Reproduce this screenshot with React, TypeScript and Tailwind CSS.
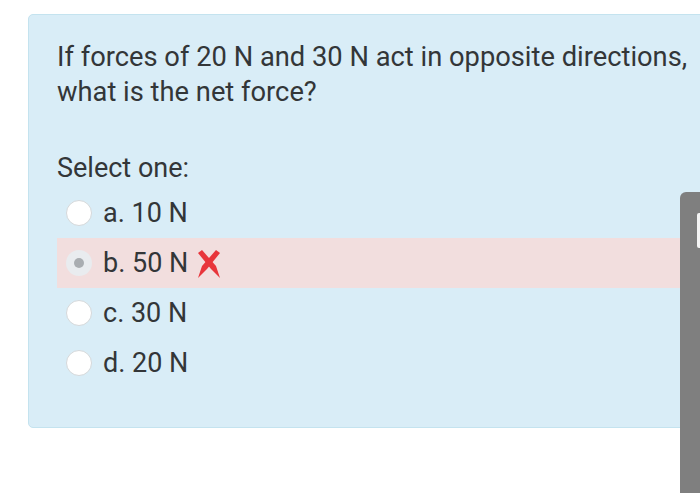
import React from "react";

const Radio = ({ checked }: { checked?: boolean }) =>
  checked ? (
    <span className="flex h-[26px] w-[26px] items-center justify-center rounded-full bg-[#e9ecef]">
      <span className="h-[10px] w-[10px] rounded-full bg-[#a9adb1]" />
    </span>
  ) : (
    <span className="h-[26px] w-[26px] rounded-full border border-[#d5d8da] bg-white" />
  );

const options = [
  { label: "a. 10 N" },
  { label: "b. 50 N", wrong: true },
  { label: "c. 30 N" },
  { label: "d. 20 N" },
];

export default function App() {
  return (
    <div
      className="relative h-[493px] w-[700px] overflow-hidden bg-white text-[#333638]"
      style={{ fontFamily: "Roboto, 'Noto Sans', sans-serif" }}
    >
      <div className="ml-[28px] mt-[14px] h-[414px] w-[700px] rounded-[5px] border border-[#c4e3ef] bg-[#d9edf7] pl-[28px] pt-[25px]">
        <div className="text-[27.3px] leading-[35px]">
          If forces of 20 N and 30 N act in opposite directions,
          <br />
          what is the net force?
        </div>
        <div className="mt-[42px] text-[27px] leading-[32px]">Select one:</div>
        <div className="mt-[4px] flex flex-col">
          {options.map((o) => (
            <div
              key={o.label}
              className={`flex h-[50px] items-center ${o.wrong ? "bg-[#f2dede]" : ""}`}
            >
              <span className="ml-[9px] mr-[11px] flex">
                <Radio checked={o.wrong} />
              </span>
              <span className="text-[27px]">{o.label}</span>
              {o.wrong && (
                <svg className="ml-[9px] mt-[2px]" width="24" height="28" viewBox="0 0 24 28">
                  <polygon points="1,3 5,0 19,16 23,28 14,19" fill="#e8353b" />
                  <polygon points="23,3 19,0 5,16 1,28 10,19" fill="#e8353b" />
                </svg>
              )}
            </div>
          ))}
        </div>
      </div>
      <div className="absolute left-[680px] top-[192px] h-[301px] w-[30px] rounded-tl-[6px] bg-[#7f7f7f]">
        <div className="absolute left-[17px] top-[21px] h-[35px] w-[10px] rounded-[2px] bg-[#f4f4f4]" />
      </div>
    </div>
  );
}
